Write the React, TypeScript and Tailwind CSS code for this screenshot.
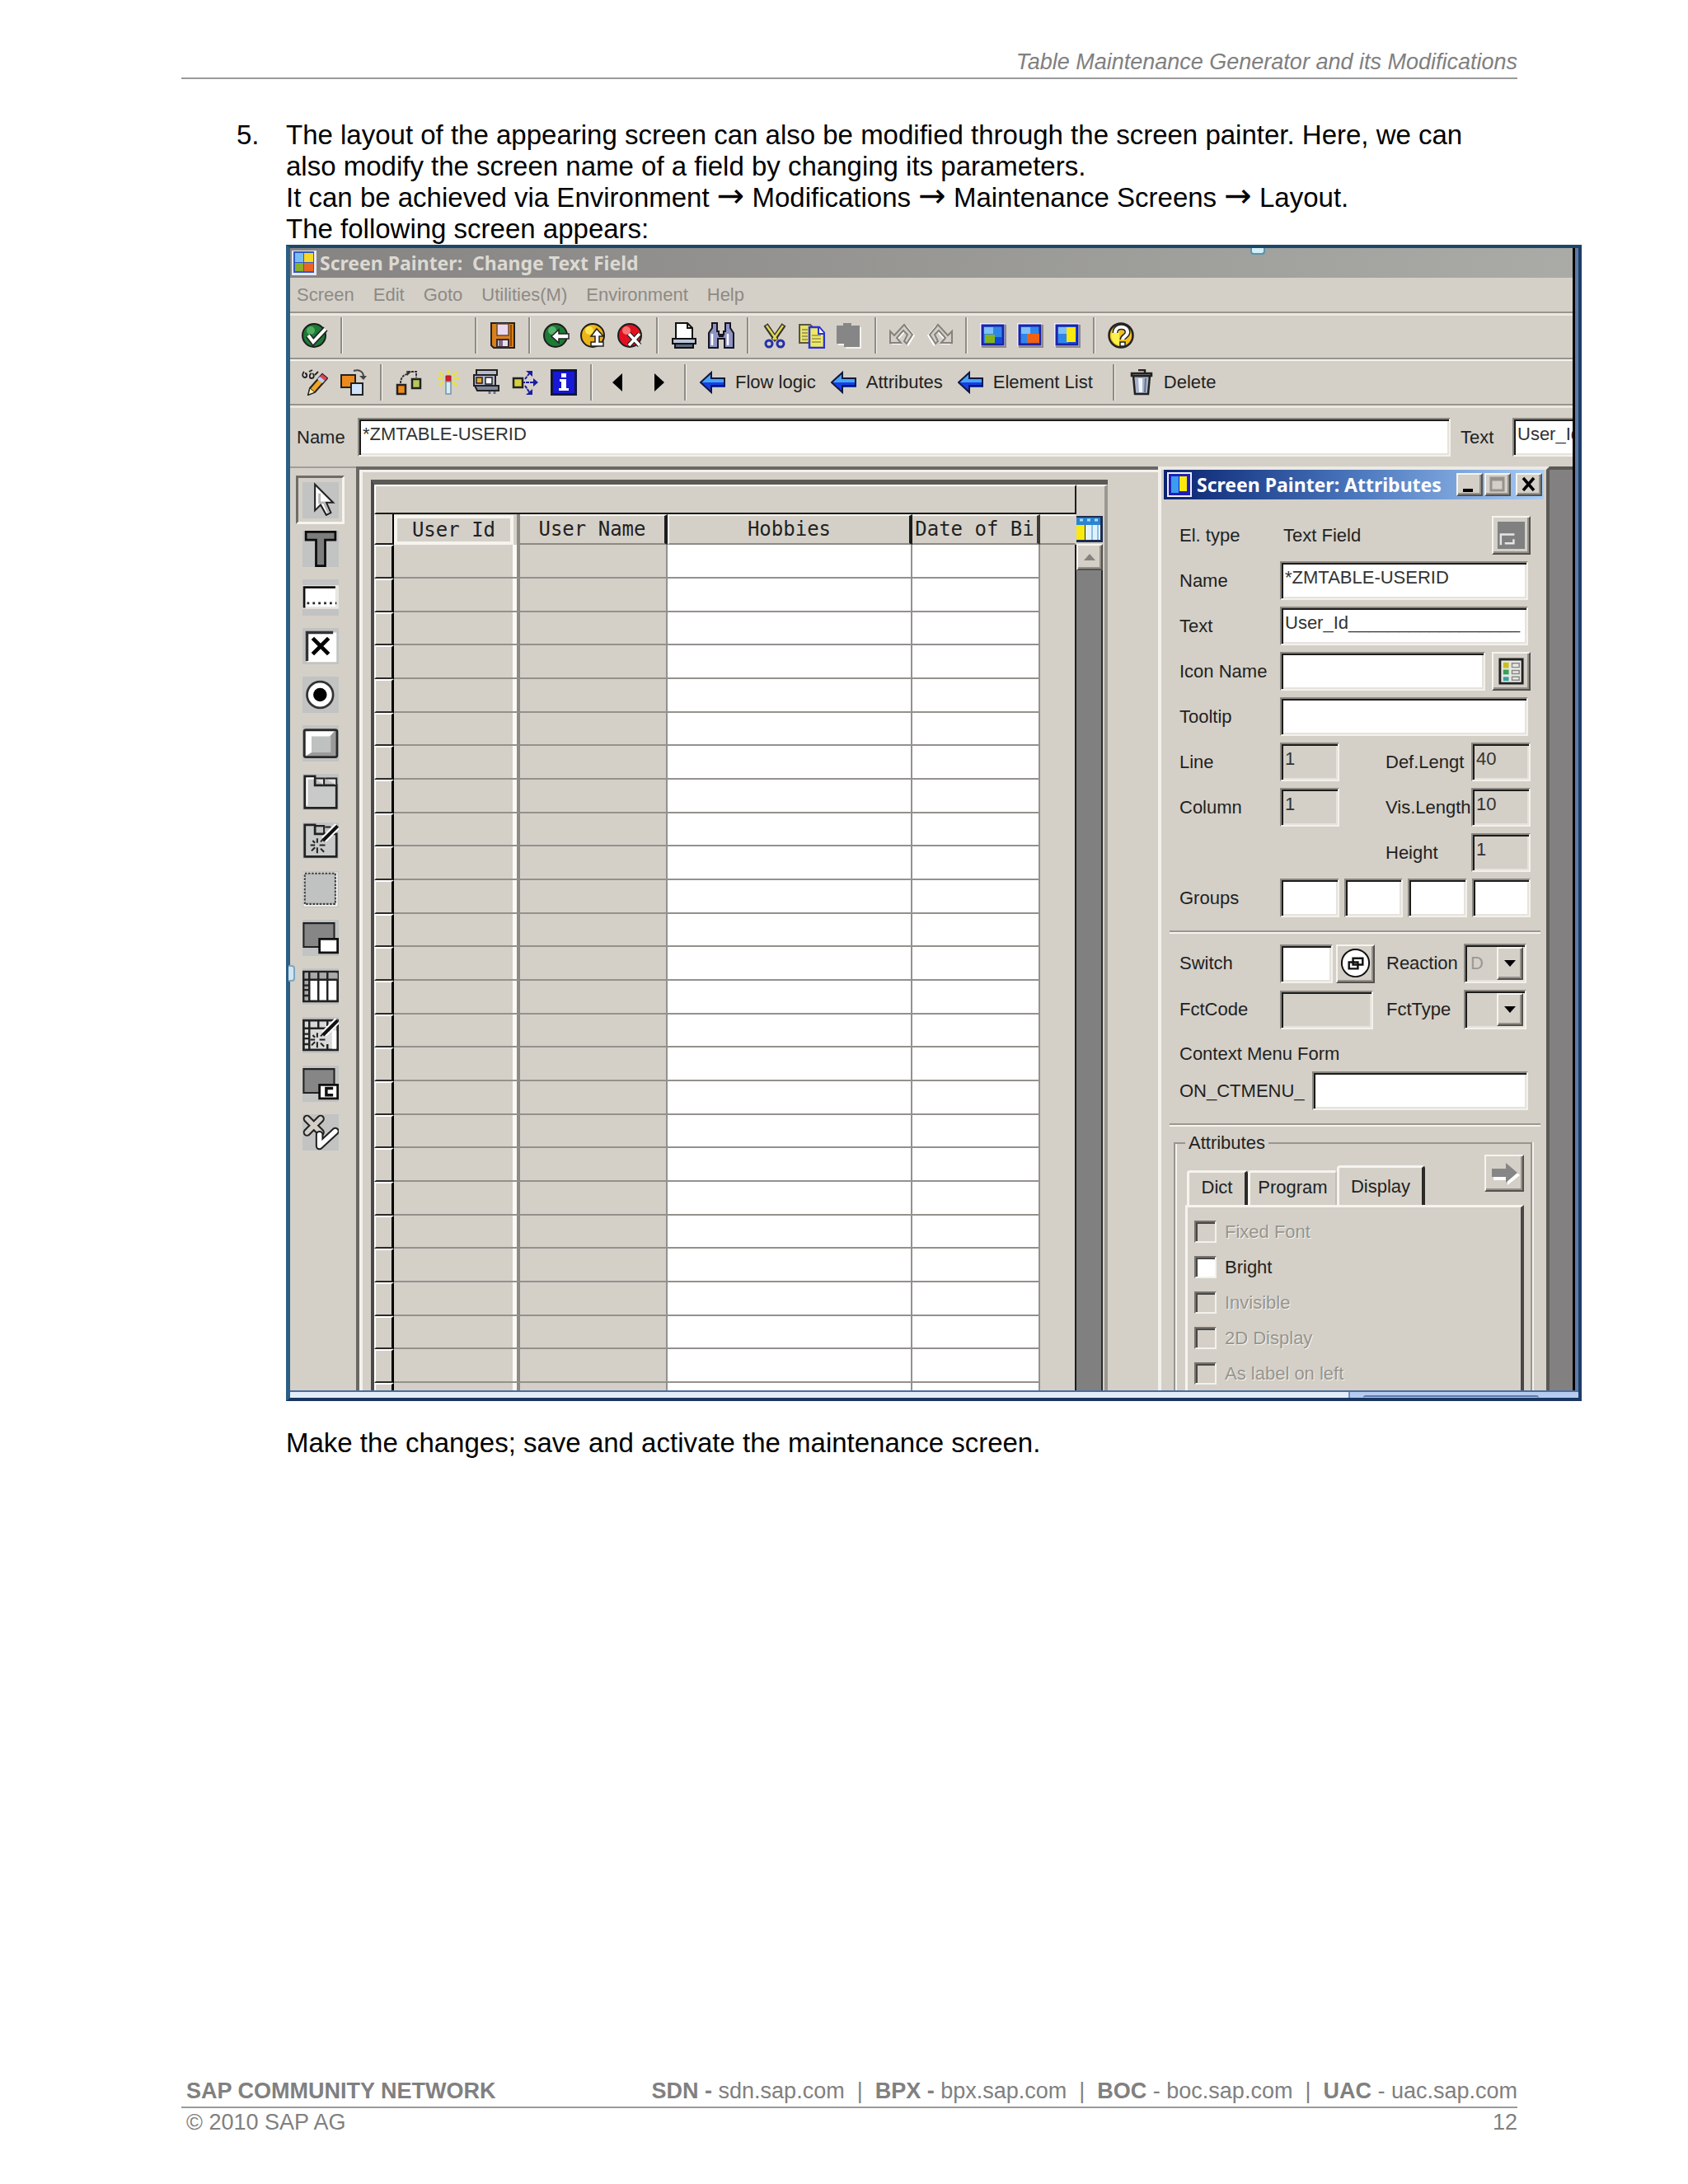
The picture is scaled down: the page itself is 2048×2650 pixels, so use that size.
import type { ReactNode } from "react";
import clsx from "clsx";

const raised =
  "bg-[#d4d0c8] border-2 border-t-[#f6f4ef] border-l-[#f6f4ef] border-r-[#55524e] border-b-[#55524e] shadow-[inset_-2px_-2px_0_#94918b]";
const sunken =
  "border-2 border-t-[#8a8781] border-l-[#8a8781] border-r-[#f3f1ec] border-b-[#f3f1ec] shadow-[inset_2px_2px_0_#1c1c1c,inset_-2px_-2px_0_#e6e3dd] outline-none";

/* ---------- toolbar icons ---------- */

function Icon({ children, size = "md" }: { children: ReactNode; size?: "md" | "lg" }) {
  return (
    <svg
      viewBox="0 0 32 32"
      className={clsx("shrink-0", size === "lg" ? "h-11 w-11" : "h-8 w-8")}
      fill="none"
      aria-hidden="true"
    >
      {children}
    </svg>
  );
}

function Ball({ fill, shine }: { fill: string; shine: string }) {
  return (
    <>
      <circle cx="15" cy="16" r="14" fill={fill} stroke="#1d1d1d" strokeWidth="2" />
      <circle cx="11" cy="10" r="5" fill={shine} opacity=".8" />
    </>
  );
}

const OkIcon = () => (
  <Icon>
    <Ball fill="#1c7a35" shine="#5cba6c" />
    <path d="M8 16l6 8L29 8" stroke="#222" strokeWidth="7" />
    <path d="M8 16l6 8L29 8" stroke="#fff" strokeWidth="4" />
  </Icon>
);

const SaveIcon = () => (
  <Icon>
    <path d="M2 1h28v30H5l-3-3z" fill="#d9801c" stroke="#222" strokeWidth="2" />
    <path d="M9 2h14v14H9z" fill="#e9d8f0" stroke="#6b4a2a" strokeWidth="1.5" />
    <path d="M9 21h14v9H9z" fill="#e4e0ee" stroke="#3a2a2a" strokeWidth="2" />
    <path d="M11 22h5v7h-5z" fill="#7d6a8c" />
    <path d="M26 3v26" stroke="#8f4a08" strokeWidth="2" />
  </Icon>
);

const BackIcon = () => (
  <Icon>
    <Ball fill="#1c7a35" shine="#6cc07a" />
    <path d="M10 17l9-8v5h12v6H19v5z" fill="#fff" stroke="#222" strokeWidth="1.5" />
  </Icon>
);

const ExitIcon = () => (
  <Icon>
    <Ball fill="#eeb318" shine="#fff15a" />
    <path d="M20 8l8 9h-5v7h5v5H13v-5h5v-7h-5z" fill="#fff" stroke="#222" strokeWidth="1.5" />
  </Icon>
);

const CancelIcon = () => (
  <Icon>
    <Ball fill="#e01020" shine="#ff8a84" />
    <path d="M14 14l13 14M27 14L14 28" stroke="#222" strokeWidth="6" />
    <path d="M14 14l13 14M27 14L14 28" stroke="#fff" strokeWidth="3.5" />
  </Icon>
);

const PrintIcon = () => (
  <Icon>
    <path d="M6 1h14l6 6v14H6z" fill="#fff" stroke="#111" strokeWidth="2" />
    <path d="M20 1v6h6" stroke="#111" strokeWidth="2" />
    <path d="M2 20h28v6H2z" fill="#b9c4d6" stroke="#111" strokeWidth="2" />
    <path d="M5 26h22v5H5z" fill="#5d6a80" stroke="#111" strokeWidth="2" />
  </Icon>
);

const FindIcon = () => (
  <Icon>
    <path
      d="M5 1h6v10h2v4h6v-4h2V1h6v6l4 6v18H20V20h-8v11H1V13l4-6z"
      fill="#8f93c4"
      stroke="#151520"
      strokeWidth="2"
    />
    <path d="M5 14v14M24 14v14" stroke="#fff" strokeWidth="2.5" />
    <path d="M13 17h6" stroke="#151520" strokeWidth="2" />
  </Icon>
);

const CutIcon = () => (
  <Icon>
    <path d="M5 3l13 19M27 3L14 22" stroke="#333" strokeWidth="6" />
    <path d="M6 4l12 17M26 4L14 21" stroke="#e3d948" strokeWidth="2.5" />
    <circle cx="9" cy="26" r="4" stroke="#2530a8" strokeWidth="3" />
    <circle cx="23" cy="26" r="4" stroke="#2530a8" strokeWidth="3" />
  </Icon>
);

const CopyIcon = () => (
  <Icon>
    <path d="M1 3h13l4 4v18H1z" fill="#e6e070" stroke="#57573a" strokeWidth="2" />
    <path d="M4 9h7M4 13h7M4 17h7M4 21h7" stroke="#8f8c3c" strokeWidth="1.5" />
    <path d="M13 6h12l6 7v18H13z" fill="#eee868" stroke="#2a32d8" strokeWidth="2.5" />
    <path d="M24 6v8h7" fill="#fff" stroke="#2a32d8" strokeWidth="2" />
    <path d="M16 16h11M16 20h11M16 24h11" stroke="#96933e" strokeWidth="1.5" />
  </Icon>
);

const PasteIcon = () => (
  <Icon>
    <path d="M3 6h8V3h9v3h11v26H12v-4H3z" fill="#f4f2ee" />
    <path d="M1 4h8V1h10v3h10v26H10v-4H1z" fill="#868686" />
  </Icon>
);

function UndoShape() {
  return (
    <>
      <path d="M3 27V12l5 5L21 4l10 12-8 13-3-3 4-9-5-5-8 9 4 6z" fill="#fff" />
      <path
        d="M1 25V11l5 5L18 3l10 12-7 11-3-3 4-8-5-5-8 9 5 6z"
        fill="#d4d0c8"
        stroke="#85827d"
        strokeWidth="2"
      />
    </>
  );
}

const UndoIcon = () => (
  <Icon>
    <UndoShape />
  </Icon>
);

const RedoIcon = () => (
  <Icon>
    <g transform="translate(32 0) scale(-1 1)">
      <UndoShape />
    </g>
  </Icon>
);

function PaneIcon({ x, y, w, h, fill }: { x: number; y: number; w: number; h: number; fill: string }) {
  return (
    <Icon>
      <path d="M2 3h30v28H2z" fill="#8d8b86" />
      <path d="M0 1h30v28H0z" fill="#f0efff" />
      <path d="M3 4h25v23H3z" fill="#2f86ea" stroke="#1c22a8" strokeWidth="3" />
      <path d="M5 6h11v8H5z" fill="#7fc0f8" />
      <path d="M17 18h10v8H17z" fill="#1148d8" />
      <rect x={x} y={y} width={w} height={h} fill={fill} />
    </Icon>
  );
}

const HelpIcon = () => (
  <Icon>
    <circle cx="16" cy="16" r="14.5" fill="#f2c21c" stroke="#222" strokeWidth="2.5" />
    <path d="M5 12a12 12 0 0 1 9-8v24A12 12 0 0 1 5 12z" fill="#fff04a" />
    <path d="M9 13c0-10 15-9 15-1 0 5-6 5-6 9" stroke="#222" strokeWidth="7" />
    <path d="M9 13c0-10 15-9 15-1 0 5-6 5-6 9" stroke="#fff" strokeWidth="4" />
    <path d="M15 24h6v5h-6z" fill="#fff" stroke="#222" strokeWidth="1.5" />
  </Icon>
);

const EditIcon = () => (
  <Icon>
    <path d="M3 3c-3 3-2 7 1 7s3-5 0-5M12 5c-3 1-3 6 0 6s4-4 1-6M9 3l4-2M20 3l-4 4" stroke="#222" strokeWidth="1.8" />
    <path d="M8 31l2-8L25 6l6 5-15 17z" fill="#f0a428" stroke="#222" strokeWidth="2" />
    <path d="M25 6l6 5-3 3-6-5z" fill="#e0405c" />
    <path d="M22 9l6 5-3 3-6-5z" fill="#b8d4f4" />
    <path d="M8 31l2-8 6 5z" fill="#fff0b0" stroke="#222" strokeWidth="1" />
  </Icon>
);

const ObjectIcon = () => (
  <Icon>
    <path d="M1 7h17v15H1z" fill="#ee8a1c" stroke="#222" strokeWidth="2" />
    <path d="M13 17h14v14H13z" fill="#cfe4fa" stroke="#222" strokeWidth="2" />
    <path d="M16 2c7-2 12 1 12 7" stroke="#444" strokeWidth="2" />
    <path d="M23 8h9l-4 5z" fill="#444" />
  </Icon>
);

const FlowIcon = () => (
  <Icon>
    <path d="M2 19h10v11H2z" fill="#ee8a1c" stroke="#222" strokeWidth="2.5" />
    <path d="M20 12h10v11H20z" fill="#b8c858" stroke="#222" strokeWidth="2.5" />
    <path d="M6 17c0-6 3-10 8-11M15 3h10v7" stroke="#333" strokeWidth="2" strokeDasharray="3 1" />
    <path d="M13 2l6 1-5 5z" fill="#333" />
  </Icon>
);

const MatchIcon = () => (
  <Icon>
    <path d="M6 3l5 5M28 3l-6 5M4 11h6M24 11h6M6 20l5-5M28 20l-6-5M17 0v6" stroke="#e8e048" strokeWidth="3" />
    <path d="M14 8h6v7h-6z" fill="#e01828" stroke="#902020" strokeWidth="1" />
    <path d="M14 15h6v15h-6z" fill="#d8ecf4" stroke="#6f95a8" strokeWidth="1.5" />
  </Icon>
);

const TestIcon = () => (
  <Icon>
    <path d="M4 1h25v6H4zM1 7h26v13H1z" fill="#b8bcd0" stroke="#222" strokeWidth="2" />
    <path d="M4 10h7v7H4z" fill="#f0a830" stroke="#222" strokeWidth="1.5" />
    <path d="M15 10h8v8h-8z" fill="#fff" stroke="#222" strokeWidth="1.5" />
    <path d="M2 20h29v6H5z" fill="#8088a0" stroke="#222" strokeWidth="2" />
    <path d="M20 27v3M26 27v3" stroke="#6a7490" strokeWidth="3" />
  </Icon>
);

const HierarchyIcon = () => (
  <Icon>
    <path d="M12 16h17M16 12l6-8M16 20l6 9" stroke="#1c1ca0" strokeWidth="2" strokeDasharray="4 1" />
    <path d="M26 11l6 5-6 5zM17 2h8v7zM17 31h8v-7z" fill="#1c1ca0" />
    <path d="M2 11h11v11H2z" fill="#d8cf40" stroke="#222" strokeWidth="2.5" />
  </Icon>
);

const InfoIcon = () => (
  <Icon>
    <path d="M1.500 1.500h29v29h-29z" fill="#1818d8" stroke="#111838" strokeWidth="3" />
    <path d="M13 5h6v5h-6zM11 12h8v11h3v3H10v-3h3v-8h-2z" fill="#fff" />
  </Icon>
);

const LeftTri = () => (
  <Icon>
    <path d="M8 16L20 5v22z" fill="#000" />
  </Icon>
);

const RightTri = () => (
  <Icon>
    <path d="M24 16L12 5v22z" fill="#000" />
  </Icon>
);

const BlueArrow = () => (
  <Icon>
    <path d="M1 16L14 4v6h17v12H14v7z" fill="#1440e8" />
    <path d="M3 15L13 6v6h17v4H3z" fill="#48a4f4" />
    <path d="M1 16L14 4v7h16v9H14v8z" stroke="#101840" strokeWidth="2" />
  </Icon>
);

const TrashIcon = () => (
  <Icon>
    <path d="M6 8h20l-2 22H8z" fill="#a8b4cc" stroke="#222" strokeWidth="2.5" />
    <path d="M12 11l1 17h4V11z" fill="#f0f4fc" />
    <path d="M21 11l-1 17" stroke="#6a748c" strokeWidth="2" />
    <path d="M4 5h24v3H4zM12 1h8v4" stroke="#222" strokeWidth="2.5" />
  </Icon>
);

/* ---------- palette icons ---------- */

const Tile = ({ children }: { children: ReactNode }) => (
  <Icon size="lg">
    <path d="M0 0h32v32H0z" fill="#c2c3c3" />
    {children}
  </Icon>
);

const Wand = () => (
  <>
    <path d="M31 3L19 15" stroke="#fff" strokeWidth="6" />
    <path d="M31 3L18 16" stroke="#111" strokeWidth="3" />
    <path
      d="M13 14v4M13 22v5M7 20h4M15 20h5M9 16l2 2M16 23l3 3M8 25l3-3M16 17l2-2"
      stroke="#222"
      strokeWidth="1.5"
    />
  </>
);

const palette: { name: string; icon: ReactNode }[] = [
  {
    name: "Select",
    icon: (
      <Tile>
        <path d="M11 2v23l5-5 5 9 4-2-4-9h6z" fill="#fff" stroke="#222" strokeWidth="1.5" />
        <path d="M15 10v8l4 0 4 9" stroke="#b5b5b5" strokeWidth="2" />
      </Tile>
    ),
  },
  {
    name: "Text field",
    icon: (
      <Tile>
        <path d="M3 1h26v7h-9v23h-8V8H3z" fill="#7d7d7d" stroke="#0c0c0c" strokeWidth="2" />
      </Tile>
    ),
  },
  {
    name: "Input field",
    icon: (
      <Tile>
        <path d="M0 5h32v21H0z" fill="#e9e7e3" />
        <path d="M2 7h27v17H2z" fill="#fff" />
        <path d="M1.500 25V7H29" stroke="#111" strokeWidth="2" />
        <path d="M4 21h26" stroke="#222" strokeWidth="2" strokeDasharray="2 3" />
      </Tile>
    ),
  },
  {
    name: "Checkbox",
    icon: (
      <Tile>
        <path d="M4 4h26v26H4z" fill="#fff" />
        <path d="M4 29V4h23" stroke="#333" strokeWidth="2.5" />
        <path d="M9 9l14 14M23 9L9 23" stroke="#000" strokeWidth="3.5" />
      </Tile>
    ),
  },
  {
    name: "Radio button",
    icon: (
      <Tile>
        <circle cx="15.500" cy="16" r="11.500" fill="#fff" stroke="#333" strokeWidth="2" />
        <circle cx="15.500" cy="16" r="6" fill="#000" />
      </Tile>
    ),
  },
  {
    name: "Pushbutton",
    icon: (
      <Tile>
        <rect x="1.500" y="4" width="29" height="24" rx="1.500" fill="#9a9a9a" stroke="#2a2a2a" strokeWidth="2" />
        <path d="M3 5.500h25L24 10H8v14l-5 3z" fill="#fff" />
        <path d="M8 10h17v14H8z" fill="#bfc0c0" />
      </Tile>
    ),
  },
  {
    name: "Tabstrip",
    icon: (
      <Tile>
        <path d="M2 30V2h9v8h19v20z" fill="#c8caca" stroke="#222" strokeWidth="2" />
        <path d="M11 4h8v6M20 4h10v6" fill="#e2e2e0" stroke="#222" strokeWidth="1.500" />
        <path d="M4 28V4h6" stroke="#fff" strokeWidth="1.500" />
      </Tile>
    ),
  },
  {
    name: "Tabstrip wizard",
    icon: (
      <Tile>
        <path d="M2 30V2h9v8h19v20z" fill="#c8caca" stroke="#222" strokeWidth="2" />
        <path d="M11 3h8v7M20 4h5" stroke="#222" strokeWidth="1.500" />
        <Wand />
      </Tile>
    ),
  },
  {
    name: "Box",
    icon: (
      <Tile>
        <path d="M1 1h30v30H1z" fill="#f1f0ec" />
        <path d="M2 2h27v27H2z" fill="#c0c1c1" stroke="#444" strokeWidth="1.500" strokeDasharray="2 1" />
      </Tile>
    ),
  },
  {
    name: "Subscreen",
    icon: (
      <Tile>
        <path d="M1 3h27v21H1z" fill="#868686" stroke="#222" strokeWidth="1.500" />
        <path d="M15 17h16v12H15z" fill="#fff" stroke="#111" strokeWidth="2" />
      </Tile>
    ),
  },
  {
    name: "Table control",
    icon: (
      <Tile>
        <path d="M1 3h30v26H1z" fill="#fff" stroke="#222" strokeWidth="2" />
        <path d="M2 4h29v6H2zM2 10h4v18H2z" fill="#aaa" />
        <path d="M1 10h30M6 3v26M14 3v26M22 3v26M1 15h5M1 19h5M1 24h5" stroke="#222" strokeWidth="1.800" />
      </Tile>
    ),
  },
  {
    name: "Table control wizard",
    icon: (
      <Tile>
        <path d="M1 3h30v26H1z" fill="#d9d9d7" stroke="#222" strokeWidth="2" />
        <path d="M26 12h4v16h-4z" fill="#fff" />
        <path d="M1 10h22M6 3v26M14 3v7M22 3v5M22 24v5M1 15h5M1 19h5M1 24h5" stroke="#222" strokeWidth="1.800" />
        <Wand />
      </Tile>
    ),
  },
  {
    name: "Custom control",
    icon: (
      <Tile>
        <path d="M1 3h27v21H1z" fill="#868686" stroke="#222" strokeWidth="1.500" />
        <path d="M15 17h16v12H15z" fill="#fff" stroke="#111" strokeWidth="2" />
        <path d="M27 20h-6v6h6" stroke="#111" strokeWidth="2.500" />
      </Tile>
    ),
  },
  {
    name: "Status icon",
    icon: (
      <Tile>
        <path d="M4 4l12 12M16 4L4 16" stroke="#222" strokeWidth="7" strokeLinecap="round" />
        <path d="M4 4l12 12M16 4L4 16" stroke="#d4d0c8" strokeWidth="4" strokeLinecap="round" />
        <path d="M15 18v10l14-13" stroke="#222" strokeWidth="7" strokeLinecap="round" strokeLinejoin="round" />
        <path d="M15 18v10l14-13" stroke="#fff" strokeWidth="4" strokeLinecap="round" strokeLinejoin="round" />
      </Tile>
    ),
  },
];

/* ---------- shared controls ---------- */

const Sep = ({ wide = false }: { wide?: boolean }) => (
  <span
    className={clsx(
      "h-11 w-[3px] shrink-0 border-l-2 border-l-[#8f8c86] bg-[#f6f4ef]",
      wide ? "mx-4" : "mx-[15px]",
    )}
  />
);

function IconButton({ label, children }: { label: string; children: ReactNode }) {
  return (
    <button type="button" aria-label={label} className="shrink-0">
      {children}
    </button>
  );
}

function Field({
  id,
  value = "",
  label,
  disabled = false,
  className,
}: {
  id?: string;
  value?: string;
  label?: string;
  disabled?: boolean;
  className?: string;
}) {
  return (
    <input
      id={id}
      type="text"
      aria-label={label}
      defaultValue={value}
      readOnly={disabled}
      className={clsx(
        "h-[47px] min-w-0 px-1 pb-2 text-[#333]",
        disabled ? "bg-[#d4d0c8]" : "bg-white",
        sunken,
        className,
      )}
    />
  );
}

function Combo({ id, value }: { id: string; value: string }) {
  return (
    <div className="relative w-[76px]">
      <select
        id={id}
        defaultValue={value}
        className={clsx("h-12 w-full appearance-none bg-[#d4d0c8] px-1.5 text-[#9b9892]", sunken)}
      >
        <option value={value}>{value}</option>
      </select>
      <span
        className={clsx(
          "pointer-events-none absolute top-1 right-1 flex h-10 w-8 items-center justify-center",
          raised,
        )}
      >
        <svg viewBox="0 0 14 8" className="h-2 w-3.5">
          <path d="M0 0h14L7 8z" fill="#000" />
        </svg>
      </span>
    </div>
  );
}

const Rule = () => (
  <div className="-mx-3 h-1 shrink-0 border-t-2 border-b-2 border-t-[#9a9791] border-b-[#f6f4ef]" />
);

/* ---------- window parts ---------- */

function MainToolbar() {
  return (
    <div className="flex h-[53px] items-center border-b-2 border-b-[#98958f] pb-1 pl-3.5">
      <IconButton label="Enter"><OkIcon /></IconButton>
      <Sep />
      <span className="w-[130px] shrink-0" />
      <Sep />
      <IconButton label="Save"><SaveIcon /></IconButton>
      <Sep />
      <div className="flex gap-[13px]">
        <IconButton label="Back"><BackIcon /></IconButton>
        <IconButton label="Exit"><ExitIcon /></IconButton>
        <IconButton label="Cancel"><CancelIcon /></IconButton>
      </div>
      <Sep />
      <div className="flex gap-[13px]">
        <IconButton label="Print"><PrintIcon /></IconButton>
        <IconButton label="Find"><FindIcon /></IconButton>
      </div>
      <Sep />
      <div className="flex gap-[13px]">
        <IconButton label="Cut"><CutIcon /></IconButton>
        <IconButton label="Copy"><CopyIcon /></IconButton>
        <IconButton label="Paste"><PasteIcon /></IconButton>
      </div>
      <Sep />
      <div className="flex gap-[13px]">
        <IconButton label="Undo"><UndoIcon /></IconButton>
        <IconButton label="Redo"><RedoIcon /></IconButton>
      </div>
      <Sep />
      <div className="flex gap-[13px]">
        <IconButton label="Element list window"><PaneIcon x={6} y={15} w={12} h={10} fill="#86b414" /></IconButton>
        <IconButton label="Text window"><PaneIcon x={12} y={14} w={15} h={11} fill="#f46010" /></IconButton>
        <IconButton label="Attributes window"><PaneIcon x={15} y={6} w={11} h={18} fill="#fbe80c" /></IconButton>
      </div>
      <Sep />
      <IconButton label="Help"><HelpIcon /></IconButton>
    </div>
  );
}

function AppToolbar() {
  return (
    <div className="flex h-14 items-center border-t-2 border-b-2 border-t-[#f3f1ec] border-b-[#98958f] pl-3.5">
      <div className="flex gap-[15px]">
        <IconButton label="Display or change"><EditIcon /></IconButton>
        <IconButton label="Other object"><ObjectIcon /></IconButton>
      </div>
      <Sep wide />
      <div className="flex gap-[15px]">
        <IconButton label="Check"><FlowIcon /></IconButton>
        <IconButton label="Activate"><MatchIcon /></IconButton>
        <IconButton label="Test"><TestIcon /></IconButton>
        <IconButton label="Where used"><HierarchyIcon /></IconButton>
        <IconButton label="Information"><InfoIcon /></IconButton>
      </div>
      <Sep wide />
      <div className="flex gap-[15px]">
        <IconButton label="Previous"><LeftTri /></IconButton>
        <IconButton label="Next"><RightTri /></IconButton>
      </div>
      <Sep wide />
      <div className="flex gap-[18px]">
        {["Flow logic", "Attributes", "Element List"].map((t) => (
          <button key={t} type="button" className="flex items-center gap-[11px] whitespace-nowrap">
            <BlueArrow />
            {t}
          </button>
        ))}
      </div>
      <span className="w-2 shrink-0" />
      <Sep wide />
      <button type="button" className="flex items-center gap-[11px]">
        <TrashIcon />
        Delete
      </button>
    </div>
  );
}

const rows = Array.from({ length: 26 }, (_, i) => i);

function TableControl() {
  const head = "h-[37px] p-0 font-normal border-t-2 border-t-[#f6f4ef] border-b-2 border-b-[#8d8a85]";
  return (
    <div className="mt-[9px] ml-2.5 flex w-[894px] flex-col border-t-[6px] border-l-4 border-t-[#5c5a57] border-l-[#4c4a48]">
      <div className="flex h-9 shrink-0">
        <div className="flex-1 border-t-2 border-r-2 border-b-2 border-l-2 border-t-white border-r-[#1c1c1c] border-b-[#1c1c1c] border-l-white" />
        <div className="w-[38px] border-t-2 border-r-4 border-t-white border-r-[#9b9892]" />
      </div>
      <div className="flex">
        <table className="min-w-0 flex-1 table-fixed border-separate border-spacing-0 font-['DejaVu_Sans_Mono','Liberation_Mono',monospace] text-2xl text-[#222]">
          <colgroup>
            <col className="w-6" />
            <col className="w-[153px]" />
            <col className="w-[179px]" />
            <col className="w-[297px]" />
            <col className="w-[155px]" />
            <col />
          </colgroup>
          <thead>
            <tr className="leading-[33px] whitespace-nowrap">
              <th className="h-[37px] border-r-2 border-b-2 border-l-2 border-r-black border-b-[#1c1c1c] border-l-white p-0" />
              <th className="h-[37px] border-r-4 border-r-[#8d8a85] p-0 font-normal">
                <div className="mr-1 border-4 border-[#f6f4ef] leading-7">User Id</div>
              </th>
              <th className={clsx(head, "border-r-4 border-r-[#1c1c1c]")}>User Name</th>
              <th className={clsx(head, "border-r-4 border-l-2 border-r-[#1c1c1c] border-l-[#f6f4ef]")}>Hobbies</th>
              <th className={clsx(head, "border-r-4 border-r-[#3c3a38]")}>Date of Bi</th>
              <th className={clsx(head, "border-r-2 border-r-transparent")} />
            </tr>
          </thead>
          <tbody className="[&_td]:h-[41px] [&_td]:border-b-2 [&_td]:border-b-[#94918d] [&_td]:p-0 [&>tr:nth-child(3n)>td]:h-10">
            {rows.map((r) => (
              <tr key={r}>
                <td className="border-t-2 border-r-3 border-l-2 border-t-white border-r-black border-l-white border-b-[#2c2a29]!" />
                <td className="border-r-4 border-r-[#8d8a85] shadow-[inset_-5px_0_0_#fbfaf7]" />
                <td className="border-r-2 border-r-[#94918d]" />
                <td className="border-r-2 border-r-[#94918d] bg-white" />
                <td className="border-r-2 border-r-[#94918d] bg-white" />
                <td className="border-r-2 border-b-0! border-r-[#1c1c1c]" />
              </tr>
            ))}
          </tbody>
        </table>
        <div className="flex w-[38px] shrink-0 flex-col border-r-4 border-r-[#9b9892]">
          <button type="button" aria-label="Configure columns" className="h-9">
            <svg viewBox="0 0 32 32" className="h-8 w-8" aria-hidden="true">
              <path d="M0 0h32v32H0z" fill="#1c2c50" />
              <path d="M0 2h29v9H0z" fill="#2c84d0" />
              <path d="M4 5h4M13 5h4M22 5h4" stroke="#a8dcf4" strokeWidth="3" />
              <path d="M0 11h10v18H0z" fill="#f8ea10" />
              <path d="M11 11h18v18H11z" fill="#e2f2fc" />
              <path d="M19 11v18M26 11v18" stroke="#88c0e4" strokeWidth="2" />
            </svg>
          </button>
          <button
            type="button"
            aria-label="Scroll up"
            className={clsx("flex h-8 w-8 items-center justify-center", raised)}
          >
            <svg viewBox="0 0 14 8" className="h-2 w-3.5">
              <path d="M0 8h14L7 0z" fill="#86837e" />
            </svg>
          </button>
          <div className="w-8 flex-1 border-r-2 border-r-[#2a2a2a] bg-[#808080]" />
        </div>
      </div>
    </div>
  );
}

const checks = ["Fixed Font", "Bright", "Invisible", "2D Display", "As label on left"];

const WinButton = ({ label, children }: { label: string; children: ReactNode }) => (
  <button type="button" aria-label={label} className={clsx("h-7 w-8", raised)}>
    <svg viewBox="0 0 28 24" className="h-full w-full" fill="none">{children}</svg>
  </button>
);

function AttributesWindow() {
  return (
    <section className="flex w-[475px] shrink-0 flex-col border-t-4 border-r-4 border-l-4 border-t-[#eceae4] border-r-[#5a5855] border-l-[#f3f1ec]">
      <header className="mx-[3px] flex h-9 shrink-0 items-center bg-linear-to-r from-[#0c2270] via-[#4a76bc] to-[#a8ccf6] pl-1 font-['Noto_Sans','Open_Sans',sans-serif] text-[23px] font-bold text-white">
        <svg viewBox="0 0 30 30" className="mr-1.5 h-[30px] w-[30px]" aria-hidden="true">
          <path d="M0 0h30v30H0z" fill="#f0f0f8" />
          <path d="M2 2h26v26H2z" fill="#2020b8" />
          <path d="M5 5h9v20H5z" fill="#3c9cf0" />
          <path d="M15 5h9v18h-9z" fill="#fbe80c" />
        </svg>
        <span className="flex-1 whitespace-nowrap">Screen Painter: Attributes</span>
        <div className="mr-0.5 flex gap-0.5">
          <WinButton label="Minimize"><path d="M6 19h12" stroke="#000" strokeWidth="4" /></WinButton>
          <WinButton label="Maximize"><path d="M6 4h15v15H6zM5 6h16" stroke="#96938d" strokeWidth="3" /></WinButton>
          <span className="w-0.5" />
          <WinButton label="Close"><path d="M7 4l13 15M20 4L7 19" stroke="#000" strokeWidth="3.500" /></WinButton>
        </div>
      </header>

      <div className="flex flex-col gap-2 pt-5 pr-[19px] pl-[22px]">
        <div className="grid h-[47px] grid-cols-[126px_1fr_47px] items-center">
          <span>El. type</span>
          <span>Text Field</span>
          <button type="button" aria-label="Change type" className={clsx("h-[47px] p-1", raised)}>
            <svg viewBox="0 0 36 36" className="h-full w-full" fill="none">
              <path d="M1 1h34v34H1z" fill="#808080" />
              <path d="M5 30V17h17M10 28h11v-5" stroke="#e8e6e2" strokeWidth="2.500" />
            </svg>
          </button>
        </div>
        <div className="grid grid-cols-[122px_1fr] items-center">
          <label htmlFor="a-name">Name</label>
          <Field id="a-name" value="*ZMTABLE-USERID" className="mr-[3px]" />
        </div>
        <div className="grid grid-cols-[122px_1fr] items-center">
          <label htmlFor="a-text">Text</label>
          <Field id="a-text" value="User_Id_________________" className="mr-[3px]" />
        </div>
        <div className="grid grid-cols-[122px_1fr_47px] items-center">
          <label htmlFor="a-icon">Icon Name</label>
          <Field id="a-icon" className="mr-2" />
          <button type="button" aria-label="Choose icon" className={clsx("h-[47px] p-1", raised)}>
            <svg viewBox="0 0 36 36" className="h-full w-full" fill="none">
              <path d="M4 3h28v30H4z" fill="#e8e8e4" stroke="#222" strokeWidth="3" />
              <path d="M8 7h7v7H8z" fill="#c8c020" />
              <path d="M8 16h7v6H8z" fill="#38a058" />
              <path d="M8 25h7v5H8z" fill="#38a0a0" />
              <path d="M19 8h9v5h-9zM19 17h9v4h-9zM19 25h9v4h-9z" stroke="#888" strokeWidth="1.500" />
            </svg>
          </button>
        </div>
        <div className="grid grid-cols-[122px_1fr] items-center">
          <label htmlFor="a-tip">Tooltip</label>
          <Field id="a-tip" className="mr-[3px]" />
        </div>
        <div className="grid grid-cols-[122px_72px_1fr_104px_72px] items-center">
          <label htmlFor="a-line">Line</label>
          <Field id="a-line" value="1" disabled />
          <label htmlFor="a-def" className="col-start-4 whitespace-nowrap">Def.Lengt</label>
          <Field id="a-def" value="40" disabled />
        </div>
        <div className="grid grid-cols-[122px_72px_1fr_104px_72px] items-center">
          <label htmlFor="a-col">Column</label>
          <Field id="a-col" value="1" disabled />
          <label htmlFor="a-vis" className="col-start-4 whitespace-nowrap">Vis.Length</label>
          <Field id="a-vis" value="10" disabled />
        </div>
        <div className="grid grid-cols-[122px_72px_1fr_104px_72px] items-center">
          <label htmlFor="a-height" className="col-start-4">Height</label>
          <Field id="a-height" value="1" disabled />
        </div>
        <div className="grid grid-cols-[122px_1fr] items-center">
          <span>Groups</span>
          <div className="grid grid-cols-4 gap-1.5">
            {[1, 2, 3, 4].map((n) => (
              <Field key={n} label={`Group ${n}`} />
            ))}
          </div>
        </div>

        <div className="my-1 pt-1">
          <Rule />
        </div>

        <div className="grid grid-cols-[122px_64px_1fr_94px_81px] items-center">
          <label htmlFor="a-switch">Switch</label>
          <Field id="a-switch" />
          <button type="button" aria-label="Search help" className={clsx("ml-1 h-[47px] w-[47px]", raised)}>
            <svg viewBox="0 0 44 44" className="h-full w-full" fill="none">
              <circle cx="22" cy="21" r="17" fill="#fff" stroke="#111" strokeWidth="2" />
              <path d="M19 15h12v8H19zM14 20h11v8H14z" fill="#fff" stroke="#111" strokeWidth="2.500" />
            </svg>
          </button>
          <label htmlFor="a-react">Reaction</label>
          <Combo id="a-react" value="D" />
        </div>
        <div className="grid grid-cols-[122px_113px_1fr_94px_81px] items-center">
          <label htmlFor="a-code">FctCode</label>
          <Field id="a-code" disabled />
          <label htmlFor="a-ftype" className="col-start-4">FctType</label>
          <Combo id="a-ftype" value="" />
        </div>
        <div>
          <div className="flex h-[43px] items-center">Context Menu Form</div>
          <div className="grid grid-cols-[161px_1fr] items-center">
            <label htmlFor="a-ctx">ON_CTMENU_</label>
            <Field id="a-ctx" className="mr-[3px]" />
          </div>
        </div>
        <div className="pt-2">
          <Rule />
        </div>
      </div>

      <fieldset className="mt-1.5 mr-[17px] ml-[15px] flex-1 border-2 border-b-0 border-[#98958f] pl-3 shadow-[inset_2px_0_0_#f3f1ec,2px_0_0_#f3f1ec]">
        <legend className="px-1 leading-7">Attributes</legend>
        <div className="flex">
          <div role="tablist" className="flex flex-1 items-end pl-0.5">
            {["Dict", "Program", "Display"].map((t) => (
              <button
                key={t}
                type="button"
                role="tab"
                aria-selected={t === "Display"}
                className={clsx(
                  "rounded-t border-t-3 border-l-3 border-t-[#f6f4ef] border-l-[#f6f4ef]",
                  t === "Display" && "h-12 w-[107px] border-r-4 border-r-[#2c2a29]",
                  t === "Dict" && "h-[42px] w-[74px] border-r-4 border-r-[#2c2a29] pb-1",
                  t === "Program" && "h-[42px] w-[108px] border-r-2 border-r-[#c2beb6] pb-1",
                )}
              >
                {t}
              </button>
            ))}
          </div>
          <button
            type="button"
            aria-label="More attributes"
            className={clsx("mr-2 mb-4 h-[45px] w-12", raised)}
          >
            <svg viewBox="0 0 44 41" className="h-full w-full" fill="none">
              <path d="M9 17h17v-6l15 12-15 12v-6H9z" fill="#fff" />
              <path d="M7 15h17V8l14 12-14 12v-7H7z" fill="#868686" />
            </svg>
          </button>
        </div>
        <div className="mr-2 flex h-full flex-col gap-4 border-t-3 border-r-4 border-l-3 border-t-[#f6f4ef] border-r-[#4a4846] border-l-[#f6f4ef] pt-4 pl-2">
          {checks.map((c) => (
            <label
              key={c}
              className={clsx(
                "flex h-[27px] items-center gap-2.5",
                c === "Bright" ? "text-[#222]" : "text-[#97948e] [text-shadow:1px_1px_0_#f6f4ef]",
              )}
            >
              <input
                type="checkbox"
                disabled={c !== "Bright"}
                className={clsx(
                  "h-[27px] w-[27px] appearance-none border-2 border-t-[#77746f] border-r-[#f3f1ec] border-b-[#f3f1ec] border-l-[#77746f] shadow-[inset_2px_2px_0_#4a4845]",
                  c === "Bright" ? "bg-white" : "bg-[#d4d0c8]",
                )}
              />
              {c}
            </label>
          ))}
        </div>
      </fieldset>
    </section>
  );
}

function ScreenPainter() {
  return (
    <div className="relative border-t-4 border-r-4 border-b-4 border-l-[5px] border-t-[#1b4866] border-r-[#1d3c6a] border-b-[#1a3560] border-l-[#2c5f84] bg-[#d4d0c8] font-['Liberation_Sans',Arial,sans-serif] text-[22px] leading-8 text-[#222]">
      <div className="border-r-4 border-r-[#5f7ba4]">
        <div className="overflow-hidden border-r-3 border-r-black">
          <header className="flex h-9 items-center bg-linear-to-r from-[#868483] to-[#aaaba6] pl-0.5 font-['Noto_Sans','Open_Sans',sans-serif] text-[23px] font-bold text-[#dcd9d2]">
            <svg viewBox="0 0 30 30" className="mr-1 h-[30px] w-[30px]" aria-hidden="true">
              <path d="M0 0h30v30H0z" fill="#e8e8f4" />
              <path d="M2 1h25v26H2z" fill="#3058c8" />
              <path d="M4 3h10v11H4z" fill="#78c0f4" />
              <path d="M15 3h11v11H15z" fill="#f8d820" />
              <path d="M4 15h10v10H4z" fill="#88b028" />
              <path d="M15 15h11v10H15z" fill="#ec6420" />
            </svg>
            <span className="whitespace-pre">Screen Painter:  Change Text Field</span>
          </header>
          <nav className="flex h-[43px] items-center gap-[23px] border-b-2 border-b-[#98958f] pl-2 text-[#8d8a85]">
            {["Screen", "Edit", "Goto", "Utilities(M)", "Environment", "Help"].map((m) => (
              <button key={m} type="button">{m}</button>
            ))}
          </nav>
          <div className="border-t-3 border-t-[#ebe8e2]">
            <MainToolbar />
          </div>
          <AppToolbar />
          <div className="flex h-[74px] items-center border-t-3 border-t-[#ebe8e2] pl-2">
            <label htmlFor="el-name" className="w-[74px] shrink-0">Name</label>
            <Field id="el-name" value="*ZMTABLE-USERID" className="flex-1" />
            <label htmlFor="el-text" className="w-[75px] shrink-0 pl-3">Text</label>
            <Field id="el-text" value="User_Id" className="-mr-8 w-[105px]" />
          </div>

          <div className="flex h-[1121px] overflow-hidden">
            <div className="w-20 shrink-0 border-t-2 border-t-[#a19e98] pt-[9px] pl-[7px]">
              {palette.map((p, i) => (
                <button
                  key={p.name}
                  type="button"
                  aria-label={p.name}
                  className={clsx(
                    "flex h-[59px] w-[59px] items-center justify-center",
                    i === 0 &&
                      "border-3 border-t-[#6f6c68] border-r-[#f6f4ef] border-b-[#f6f4ef] border-l-[#6f6c68]",
                  )}
                >
                  {p.icon}
                </button>
              ))}
            </div>
            <div className="flex-1 border-t-4 border-l-4 border-[#6a6764]">
              <div className="h-full border-t-3 border-l-4 border-[#f3f1ec]">
                <TableControl />
              </div>
            </div>
            <AttributesWindow />
            <div className="w-7 shrink-0 border-t-4 border-t-[#5a5855] bg-[#838081]" />
          </div>
        </div>
      </div>
      <div className="flex h-[9px] border-t-2 border-t-[#4c6c9e]">
        <div className="flex-1 bg-[#e3edf8]" />
        <div className="w-[279px] border-l-2 border-l-[#6c90c8] bg-[#b4ccf0] pt-1 pr-12 pl-4">
          <div className="h-full rounded-t border-t-2 border-t-[#5878a8]" />
        </div>
      </div>
      {/* resize handles */}
      <span className="absolute top-0 right-[380px] h-2 w-[18px] rounded-b border-2 border-t-0 border-[#5f93ac] bg-[#d2f0f6]" />
      <span className="absolute top-[870px] -left-0.5 h-5 w-2 rounded-r border-2 border-l-0 border-[#7fa6c0] bg-[#cfe6f4]" />
    </div>
  );
}

const Arrow = () => <span className="font-['DejaVu_Sans',sans-serif] text-[40px] leading-[0]">→</span>;

const links = [
  { code: "SDN", host: "sdn.sap.com", boldDash: true },
  { code: "BPX", host: "bpx.sap.com", boldDash: true },
  { code: "BOC", host: "boc.sap.com", boldDash: false },
  { code: "UAC", host: "uac.sap.com", boldDash: false },
];

export default function App() {
  return (
    <div className="flex min-h-screen flex-col bg-white font-['Liberation_Sans',Arial,sans-serif] text-black">
      <header className="mr-[207px] ml-[220px] border-b-2 border-b-[#9a9a9a] pt-[60px] pb-1 text-right text-[27px] leading-[30px] text-[#808080] italic">
        Table Maintenance Generator and its Modifications
      </header>

      <main className="mt-[49px] mr-[129px] ml-[287px] text-[33px] leading-[38px]">
        <ol start={5}>
          <li className="flex">
            <span className="w-[60px] shrink-0">5.</span>
            <div className="min-w-0 flex-1">
              <p className="pr-[78px]">
                The layout of the appearing screen can also be modified through the screen painter. Here, we can
                <br />
                also modify the screen name of a field by changing its parameters.
                <br />
                It can be achieved via Environment <Arrow /> Modifications <Arrow /> Maintenance Screens <Arrow /> Layout.
                <br />
                The following screen appears:
              </p>
              <ScreenPainter />
              <p className="mt-8">Make the changes; save and activate the maintenance screen.</p>
            </div>
          </li>
        </ol>
      </main>

      <footer className="mt-auto mr-[207px] ml-[220px] pb-[60px] text-[27px] text-[#808080]">
        <div className="flex justify-between border-b-2 border-b-[#9a9a9a] pb-1 pl-1.5 leading-[30px]">
          <strong>SAP COMMUNITY NETWORK</strong>
          <p className="whitespace-pre">
            {links.map((l, i) => (
              <span key={l.code}>
                {i > 0 && "  |  "}
                <strong>{l.boldDash ? `${l.code} -` : l.code}</strong>
                {l.boldDash ? " " : " - "}
                <a href={`https://${l.host}`}>{l.host}</a>
              </span>
            ))}
          </p>
        </div>
        <div className="flex justify-between pt-0.5 pl-1.5 leading-[30px]">
          <span>© 2010 SAP AG</span>
          <span>12</span>
        </div>
      </footer>
    </div>
  );
}
